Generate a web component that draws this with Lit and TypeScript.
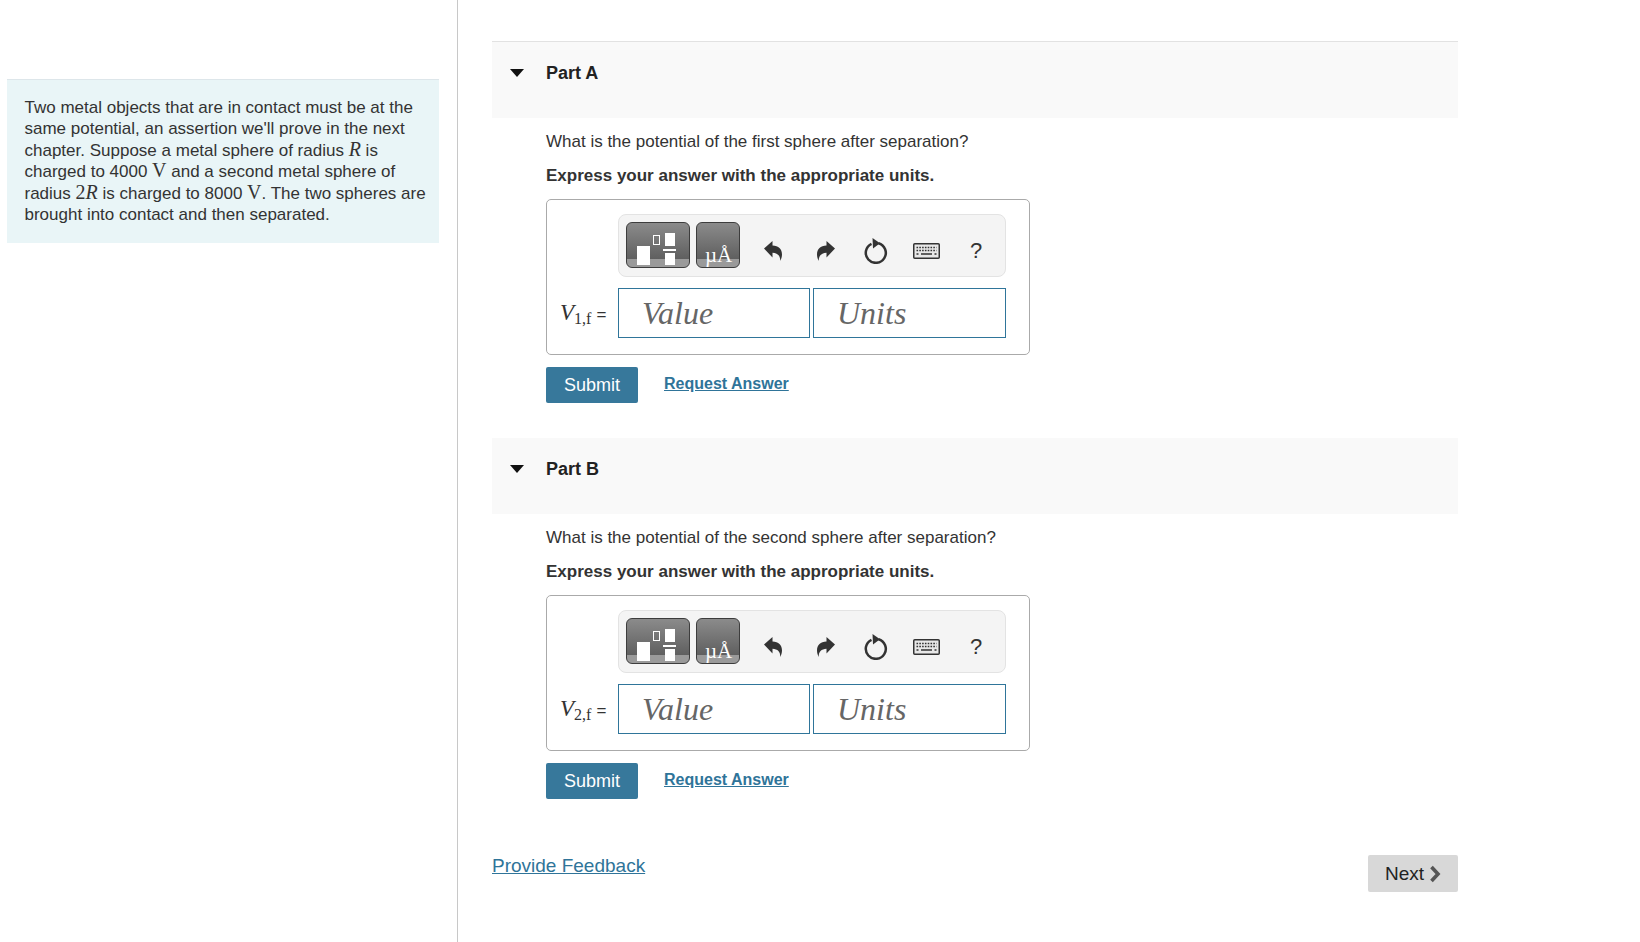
import { LitElement, html, css } from 'lit';
import { customElement, property } from 'lit/decorators.js';

@customElement('answer-part')
export class AnswerPart extends LitElement {
  @property() title = '';
  @property() question = '';
  @property() sub = '';
  @property({ type: Boolean }) first = false;

  static styles = css`
    :host {
      display: block;
      font-family: 'Liberation Sans', Arial, sans-serif;
      color: #333;
    }
    .head {
      display: flex;
      align-items: flex-start;
      height: 76px;
      box-sizing: border-box;
      background: #f9f9f9;
      padding: 20px 0 0 18px;
      font-size: 18px;
      font-weight: 700;
      line-height: 22px;
      color: #222;
    }
    .head.first {
      height: 77px;
      border-top: 1px solid #e2e2e2;
    }
    .caret {
      width: 0;
      height: 0;
      margin: 7px 22px 0 0;
      border-left: 7.5px solid transparent;
      border-right: 7.5px solid transparent;
      border-top: 8px solid #111;
    }
    .body {
      padding-left: 54px;
    }
    .question {
      margin: 14px 0 0;
      font-size: 17px;
      line-height: 20px;
    }
    .hint {
      margin: 14px 0 13px;
      font-size: 17px;
      line-height: 20px;
      font-weight: 700;
    }
    .box {
      width: 484px;
      height: 156px;
      box-sizing: border-box;
      border: 1px solid #aaa;
      border-radius: 5px;
      padding: 14px 0 0 71px;
      position: relative;
    }
    .toolbar {
      display: flex;
      align-items: flex-start;
      width: 388px;
      height: 63px;
      box-sizing: border-box;
      background: #f4f4f4;
      border: 1px solid #e3e3e3;
      border-radius: 8px;
      padding: 7px 0 0 7px;
    }
    .tpl {
      height: 46px;
      box-sizing: border-box;
      border: 1px solid #3d3d3d;
      border-radius: 6px;
      background: linear-gradient(#8b8b8b, #5f5f5f 82%, #9a9a9a 82%);
      margin-right: 6px;
      display: block;
      position: relative;
      overflow: hidden;
    }
    .tpl.wide {
      width: 64px;
    }
    .tpl.unit {
      width: 44px;
    }
    .tpl svg {
      display: block;
    }
    .unit-text {
      position: absolute;
      left: 8px;
      bottom: 0;
      color: #fff;
      font: 21px/24px 'Liberation Serif', serif;
      white-space: nowrap;
    }
    .tools {
      display: flex;
      align-items: center;
      height: 46px;
      margin-top: 6px;
    }
    .tool {
      display: block;
      flex: none;
      color: #333;
    }
    .help {
      font-size: 22px;
      line-height: 24px;
      color: #333;
      margin-left: 30px;
    }
    .row {
      display: flex;
      align-items: center;
      margin-top: 11px;
      margin-left: -58px;
    }
    .label {
      width: 58px;
      box-sizing: border-box;
      font: italic 23px/28px 'Liberation Serif', serif;
      color: #333;
      white-space: nowrap;
    }
    .label sub {
      font-size: 16px;
      font-style: normal;
      vertical-align: -4px;
      line-height: 0;
    }
    .label .eq {
      font: 17px 'Liberation Sans', sans-serif;
      margin-left: 5px;
    }
    input {
      box-sizing: border-box;
      height: 50px;
      border: 1px solid #2f759a;
      border-radius: 0;
      outline: none;
      padding: 0 0 0 23px;
      margin: 0;
      background: #fff;
      font: italic 32px 'Liberation Serif', serif;
    }
    input::placeholder {
      color: #666;
      opacity: 1;
    }
    input.value {
      width: 192px;
      margin-right: 3px;
    }
    input.units {
      width: 193px;
    }
    .actions {
      display: flex;
      align-items: center;
      margin-top: 12px;
    }
    .submit {
      width: 92px;
      height: 36px;
      box-sizing: border-box;
      border: 0;
      border-radius: 2px;
      padding: 0;
      background: #37789b;
      color: #fff;
      font: 18px 'Liberation Sans', sans-serif;
    }
    .req {
      margin: -2px 0 0 26px;
      color: #2f7499;
      font-size: 16px;
      font-weight: 700;
      text-decoration: underline;
    }
  `;

  render() {
    return html`
      <div class="head ${this.first ? 'first' : ''}">
        <span class="caret"></span>
        <span>${this.title}</span>
      </div>
      <div class="body">
        <p class="question">${this.question}</p>
        <p class="hint">Express your answer with the appropriate units.</p>
        <div class="box">
          <div class="toolbar">
            <span class="tpl wide">
              <svg width="62" height="44" viewBox="0 0 62 44" fill="#fff">
                <rect x="10" y="23" width="13" height="19" />
                <rect x="26.5" y="12.5" width="6" height="9" fill="none" stroke="#fff" />
                <rect x="38" y="10" width="10" height="13" />
                <rect x="36" y="26" width="13" height="2" />
                <rect x="38" y="30" width="10" height="12" />
              </svg>
            </span>
            <span class="tpl unit"><span class="unit-text">µÅ</span></span>
            <div class="tools">
              <svg class="tool" style="margin-left:17px" width="20" height="22" viewBox="0 0 20 22" fill="currentColor">
                <path d="M1 8.5 9.5 1v4.6c6 .2 9.5 3.600 9.500 9 0 2.500-.8 4.800-1.800 6.400 .4-5-2.500-8-7.700-8.200V17.500z" />
              </svg>
              <svg class="tool" style="margin-left:33px" width="20" height="22" viewBox="0 0 20 22" fill="currentColor">
                <path d="M19 8.500 10.500 1v4.600C4.500 5.800 1 9.200 1 14.600c0 2.500.8 4.800 1.800 6.400-.4-5 2.500-8 7.700-8.200v4.700z" />
              </svg>
              <svg class="tool" style="margin-left:28px" width="24" height="26" viewBox="0 0 24 26" fill="none">
                <path d="M14.500 5.200A10 10 0 1 1 7.500 5.800" stroke="currentColor" stroke-width="2.500" />
                <path d="M8.500 0 16 5.200 9 10.500z" fill="currentColor" />
              </svg>
              <svg class="tool" style="margin-left:25px" width="27" height="16" viewBox="0 0 27 16">
                <rect x=".75" y=".75" width="25.500" height="14.500" rx="1" fill="#e8e8e8" stroke="#333" stroke-width="1.500" />
                <path d="M3.500 4.500h20M3.500 7.500h20" stroke="#333" stroke-width="1.600" stroke-dasharray="1.600 1.200" />
                <path d="M3.500 11h2M8 11h11M21.500 11h2" stroke="#333" stroke-width="1.600" />
              </svg>
              <span class="help">?</span>
            </div>
          </div>
          <div class="row">
            <span class="label">V<sub>${this.sub}</sub><span class="eq">=</span></span>
            <input class="value" placeholder="Value" />
            <input class="units" placeholder="Units" />
          </div>
        </div>
        <div class="actions">
          <button class="submit">Submit</button>
          <span class="req">Request Answer</span>
        </div>
      </div>
    `;
  }
}

@customElement('app-root')
export class AppRoot extends LitElement {
  static styles = css`
    :host {
      display: flex;
      height: 942px;
      overflow: hidden;
      background: #fff;
      font-family: 'Liberation Sans', Arial, sans-serif;
      color: #333;
    }
    aside {
      width: 458px;
      height: 942px;
      box-sizing: border-box;
      flex: none;
      border-right: 1px solid #c8c8c8;
      padding: 79px 0 0 7px;
    }
    .intro {
      width: 432px;
      height: 164px;
      box-sizing: border-box;
      background: #e9f5f7;
      border-top: 1px solid #dde6ea;
      padding: 17px 10px 0 17.500px;
      font-size: 17px;
      line-height: 21.400px;
    }
    .intro i,
    .intro b {
      font-family: 'Liberation Serif', serif;
      font-size: 20px;
      font-weight: 400;
      line-height: 0;
    }
    main {
      width: 966px;
      padding: 41px 0 0 34px;
    }
    answer-part + answer-part {
      margin-top: 35px;
    }
    .foot {
      display: flex;
      justify-content: space-between;
      align-items: flex-start;
      margin-top: 56px;
    }
    .feedback {
      margin-top: -1px;
      font-size: 19px;
      line-height: 24px;
      color: #2f7499;
      text-decoration: underline;
    }
    .next {
      display: flex;
      align-items: center;
      justify-content: center;
      gap: 5px;
      width: 90px;
      height: 37px;
      border-radius: 2px;
      background: #d8d8d8;
      color: #222;
      font-size: 19px;
    }
  `;

  render() {
    return html`
      <aside>
        <div class="intro">
          Two metal objects that are in contact must be at the same potential, an assertion we'll prove in the next
          chapter. Suppose a metal sphere of radius <i>R</i> is charged to 4000 <b>V</b> and a second metal sphere of
          radius <b>2</b><i>R</i> is charged to 8000 <b>V</b>. The two spheres are brought into contact and then
          separated.
        </div>
      </aside>
      <main>
        <answer-part
          first
          title="Part A"
          question="What is the potential of the first sphere after separation?"
          sub="1,f"
        ></answer-part>
        <answer-part
          title="Part B"
          question="What is the potential of the second sphere after separation?"
          sub="2,f"
        ></answer-part>
        <div class="foot">
          <span class="feedback">Provide Feedback</span>
          <span class="next">
            Next
            <svg width="12" height="18" viewBox="0 0 12 18" fill="none">
              <path d="M2.500 2 9 9 2.500 16" stroke="#555" stroke-width="3.600" />
            </svg>
          </span>
        </div>
      </main>
    `;
  }
}
